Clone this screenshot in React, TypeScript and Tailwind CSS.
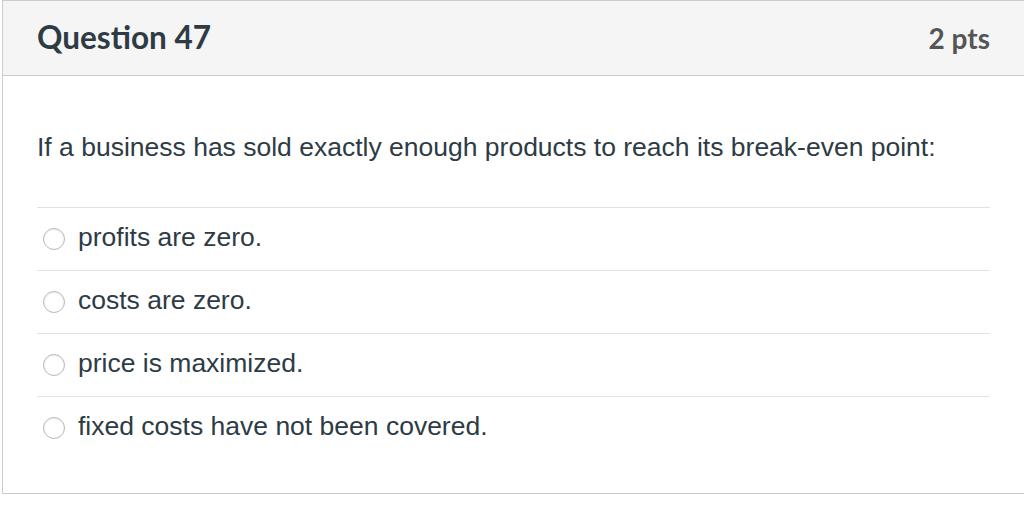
const answers = [
  'profits are zero.',
  'costs are zero.',
  'price is maximized.',
  'fixed costs have not been covered.',
];

export default function App() {
  return (
    <div className="w-[1024px] h-[505px] overflow-hidden bg-white">
      <div className="ml-[2px] w-[1026px] border border-[#c7cdd1] bg-white">
        {/* Header */}
        <div className="h-[75px] bg-[#f5f5f5] border-b border-[#c7cdd1] pl-[34px] pr-[37px] flex items-center justify-between font-['Lato',sans-serif] font-bold">
          <h2 className="text-[31.5px] text-[#2d3b45] leading-none">Question 47</h2>
          <span className="text-[28px] text-[#555555] leading-none">2 pts</span>
        </div>

        {/* Body */}
        <div className="pl-[34px] pr-[37px] pt-[55px] pb-[34px] font-['Liberation_Sans',Arial,sans-serif] text-[#2d3b45]">
          <p className="text-[26.5px] leading-[32px] mb-[44px]">
            If a business has sold exactly enough products to reach its break-even point:
          </p>
          <div>
            {answers.map((a) => (
              <div key={a} className="h-[63px] border-t border-[#e2e2e2] flex items-center">
                <span className="ml-[6px] w-[22px] h-[22px] rounded-full border border-[#b8b8b8] bg-white shadow-[inset_0_1px_2px_rgba(0,0,0,0.08)]" />
                <span className="ml-[13px] text-[26.5px] leading-none -mt-[3px]">{a}</span>
              </div>
            ))}
          </div>
        </div>
      </div>
    </div>
  );
}
